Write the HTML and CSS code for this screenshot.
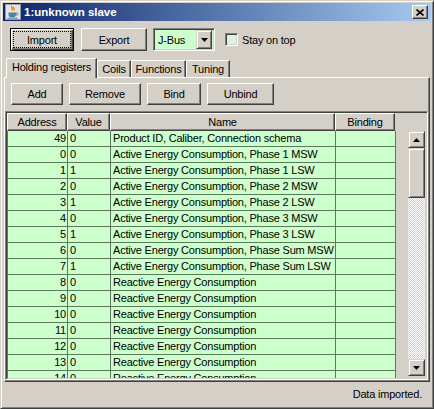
FILE: index.html
```html
<!DOCTYPE html>
<html lang="en">
  <head>
    <meta charset="UTF-8" />
    <title>1:unknown slave</title>
    <link rel="stylesheet" href="styles.css">
  </head>
  <body>
    <div class="window">
      <div class="titlebar">
        <svg class="app-icon" width="16" height="16" viewBox="0 0 16 16">
          <rect x="0.5" y="0.5" width="15" height="15" fill="#e4e4e4" stroke="#9a9a9a" />
          <path d="M7 2c-1.5 1.5 1.5 2.5 0 4.5M9 3c-1 1 1 2 0 3.5" stroke="#e76f00" fill="none" stroke-width="1.2" />
          <path d="M3.5 8.5h7.5v2.5c0 1.6-1.4 2.5-3.7 2.5s-3.8-.9-3.8-2.5z" fill="#5382a1" />
          <path d="M11 9.2h1.3c1 0 1 1.8 0 1.8H11" stroke="#5382a1" fill="none" />
          <path d="M2.5 14.2h10" stroke="#5382a1" />
        </svg>
        <span class="title">1:unknown slave</span>
        <span class="close-btn">
          <svg width="8" height="7" viewBox="0 0 8 7">
            <path d="M0.5 0.5l7 6M7.5 0.5l-7 6" stroke="#000" stroke-width="1.6" />
          </svg>
        </span>
      </div>

      <div class="toolbar">
        <button class="btn btn-default import-btn"><span class="focus-rect">Import</span></button>
        <button class="btn export-btn">Export</button>
        <div class="combo">
          <span class="combo-text">J-Bus</span>
          <span class="combo-arrow">
            <svg width="7" height="4" viewBox="0 0 7 4"><path d="M0 0h7L3.5 4z" fill="#000" /></svg>
          </span>
        </div>
        <label class="check"><span class="check-box"></span>Stay on top</label>
      </div>

      <div class="tabs">
        <span class="tab tab-active tab-holding">Holding registers</span>
        <span class="tab tab-coils">Coils</span>
        <span class="tab tab-functions">Functions</span>
        <span class="tab tab-tuning">Tuning</span>
      </div>

      <div class="panel">
        <div class="actions">
          <button class="btn add-btn">Add</button>
          <button class="btn remove-btn">Remove</button>
          <button class="btn bind-btn">Bind</button>
          <button class="btn unbind-btn">Unbind</button>
        </div>

        <div class="scrollpane">
          <div class="header-row">
            <span class="th col-address">Address</span>
            <span class="th col-value">Value</span>
            <span class="th col-name">Name</span>
            <span class="th col-binding">Binding</span>
          </div>
          <div class="body-row">
            <div class="viewport">
              <table class="grid">
                <colgroup>
                  <col class="col-address" />
                  <col class="col-value" />
                  <col class="col-name" />
                  <col class="col-binding" />
                </colgroup>
                <tr><td class="num">49</td><td>0</td><td>Product ID, Caliber, Connection schema</td><td></td></tr>
                <tr><td class="num">0</td><td>0</td><td>Active Energy Consumption, Phase 1 MSW</td><td></td></tr>
                <tr><td class="num">1</td><td>1</td><td>Active Energy Consumption, Phase 1 LSW</td><td></td></tr>
                <tr><td class="num">2</td><td>0</td><td>Active Energy Consumption, Phase 2 MSW</td><td></td></tr>
                <tr><td class="num">3</td><td>1</td><td>Active Energy Consumption, Phase 2 LSW</td><td></td></tr>
                <tr><td class="num">4</td><td>0</td><td>Active Energy Consumption, Phase 3 MSW</td><td></td></tr>
                <tr><td class="num">5</td><td>1</td><td>Active Energy Consumption, Phase 3 LSW</td><td></td></tr>
                <tr><td class="num">6</td><td>0</td><td>Active Energy Consumption, Phase Sum MSW</td><td></td></tr>
                <tr><td class="num">7</td><td>1</td><td>Active Energy Consumption, Phase Sum LSW</td><td></td></tr>
                <tr><td class="num">8</td><td>0</td><td>Reactive Energy Consumption</td><td></td></tr>
                <tr><td class="num">9</td><td>0</td><td>Reactive Energy Consumption</td><td></td></tr>
                <tr><td class="num">10</td><td>0</td><td>Reactive Energy Consumption</td><td></td></tr>
                <tr><td class="num">11</td><td>0</td><td>Reactive Energy Consumption</td><td></td></tr>
                <tr><td class="num">12</td><td>0</td><td>Reactive Energy Consumption</td><td></td></tr>
                <tr><td class="num">13</td><td>0</td><td>Reactive Energy Consumption</td><td></td></tr>
                <tr><td class="num">14</td><td>0</td><td>Reactive Energy Consumption</td><td></td></tr>
              </table>
            </div>
            <div class="vscroll">
              <span class="scroll-btn">
                <svg width="7" height="4" viewBox="0 0 7 4"><path d="M0 4h7L3.5 0z" fill="#000" /></svg>
              </span>
              <span class="scroll-thumb"></span>
              <span class="scroll-track"></span>
              <span class="scroll-btn">
                <svg width="7" height="4" viewBox="0 0 7 4"><path d="M0 0h7L3.5 4z" fill="#000" /></svg>
              </span>
            </div>
          </div>
        </div>
      </div>

      <div class="status">Data imported.</div>
    </div>
  </body>
</html>
```

FILE: styles.css
```css
body {
  margin: 0;
  font-family: "Liberation Sans", Arial, sans-serif;
  font-size: 11px;
  letter-spacing: -0.2px;
  color: #000;
  background: #d4d0c8;
}
.window {
  width: 434px;
  height: 409px;
  box-sizing: border-box;
  padding: 2px;
  border: 1px solid;
  border-color: #d4d0c8 #404040 #404040 #d4d0c8;
  box-shadow: inset 1px 1px #fff, inset -1px -1px #808080;
  background: #d4d0c8;
  display: flex;
  flex-direction: column;
}

/* Title bar */
.titlebar {
  height: 18px;
  flex: none;
  display: flex;
  align-items: center;
  padding-left: 2px;
  background: linear-gradient(to right, #0a246a, #a6caf0);
}
.app-icon {
  display: block;
  flex: none;
}
.title {
  margin-left: 3px;
  color: #fff;
  font-weight: bold;
  font-size: 11.5px;
  letter-spacing: 0;
}
.close-btn {
  margin-left: auto;
  margin-right: 3px;
  width: 16px;
  height: 14px;
  box-sizing: border-box;
  border: 1px solid;
  border-color: #fff #404040 #404040 #fff;
  box-shadow: inset -1px -1px #808080;
  background: #d4d0c8;
  display: flex;
  align-items: center;
  justify-content: center;
}
.close-btn svg {
  display: block;
}

/* Buttons */
.btn {
  height: 23px;
  padding: 0;
  box-sizing: border-box;
  border: 1px solid;
  border-color: #fff #404040 #404040 #fff;
  box-shadow: inset -1px -1px #808080;
  background: #d4d0c8;
  font-family: inherit;
  font-size: 11px;
  letter-spacing: -0.2px;
  color: #000;
  flex: none;
}
.btn-default {
  border-color: #000;
  box-shadow: inset 1px 1px #fff, inset -1px -1px #404040, inset -2px -2px #808080;
  display: flex;
  align-items: center;
  justify-content: center;
}
.focus-rect {
  display: flex;
  align-items: center;
  justify-content: center;
  width: 56px;
  height: 15px;
  border: 1px dotted #000;
}

/* Toolbar */
.toolbar {
  height: 30px;
  flex: none;
  box-sizing: border-box;
  padding: 7px 0 0 7px;
  display: flex;
  align-items: flex-start;
}
.import-btn {
  width: 64px;
}
.export-btn {
  width: 66px;
  margin-left: 7px;
}
.combo {
  width: 62px;
  height: 23px;
  margin-left: 6px;
  box-sizing: border-box;
  border: 1px solid;
  border-color: #808080 #fff #fff #808080;
  box-shadow: inset 1px 1px #404040, inset -1px -1px #d4d0c8;
  background: #ccffcc;
  display: flex;
  align-items: center;
  padding: 2px;
}
.combo-text {
  flex: 1;
  padding-left: 2px;
}
.combo-arrow {
  width: 16px;
  height: 19px;
  box-sizing: border-box;
  border: 1px solid;
  border-color: #d4d0c8 #404040 #404040 #d4d0c8;
  box-shadow: inset 1px 1px #fff, inset -1px -1px #808080;
  background: #d4d0c8;
  display: flex;
  align-items: center;
  justify-content: center;
}
.combo-arrow svg,
.scroll-btn svg {
  display: block;
}
.check {
  display: flex;
  align-items: center;
  margin-left: 10px;
  height: 23px;
}
.check-box {
  width: 13px;
  height: 13px;
  box-sizing: border-box;
  margin-right: 4px;
  border: 1px solid;
  border-color: #808080 #fff #fff #808080;
  box-shadow: inset 1px 1px #404040, inset -1px -1px #d4d0c8;
  background: #d9f5dd;
}

/* Tabs */
.tabs {
  height: 19px;
  flex: none;
  margin-top: 7px;
  padding-left: 3px;
  display: flex;
  align-items: flex-end;
  position: relative;
  z-index: 1;
}
.tab {
  height: 17px;
  box-sizing: border-box;
  border-top: 1px solid #fff;
  border-left: 1px solid #fff;
  border-right: 1px solid #404040;
  box-shadow: inset -1px 0 #808080;
  display: flex;
  align-items: center;
  justify-content: center;
  background: #d4d0c8;
}
.tab-active {
  height: 20px;
  margin-bottom: -1px;
  padding-bottom: 3px;
}
.tab-holding {
  width: 91px;
}
.tab-coils {
  width: 34px;
}
.tab-functions {
  width: 55px;
}
.tab-tuning {
  width: 44px;
}

/* Tab panel */
.panel {
  flex: 1;
  margin: 0 1px;
  box-sizing: border-box;
  border: 1px solid;
  border-color: #fff #404040 #404040 #fff;
  box-shadow: inset -1px -1px #808080;
  padding: 5px 1px 1px 0;
  display: flex;
  flex-direction: column;
}
.actions {
  display: flex;
  gap: 6px;
  padding-left: 6px;
  height: 22px;
  flex: none;
}
.actions .btn {
  height: 22px;
}
.add-btn {
  width: 52px;
}
.remove-btn {
  width: 72px;
}
.bind-btn {
  width: 54px;
}
.unbind-btn {
  width: 67px;
}

/* Table */
.scrollpane {
  margin-top: 6px;
  height: 269px;
  flex: none;
  box-sizing: border-box;
  border: 1px solid;
  border-color: #808080 #fff #fff #808080;
  box-shadow: inset 1px 1px #404040, inset -1px -1px #d4d0c8;
  padding: 1px 2px 1px 1px;
  display: flex;
  flex-direction: column;
  overflow: hidden;
}
.header-row {
  display: flex;
  height: 18px;
  flex: none;
}
.th {
  box-sizing: border-box;
  border: 1px solid;
  border-color: #fff #404040 #404040 #fff;
  box-shadow: inset -1px -1px #808080;
  display: flex;
  align-items: center;
  justify-content: center;
}
.col-address {
  width: 60px;
}
.col-value {
  width: 43px;
}
.col-name {
  width: 225px;
}
.col-binding {
  width: 60px;
}
.body-row {
  flex: 1;
  display: flex;
  min-height: 0;
}
.viewport {
  flex: 1;
  overflow: hidden;
}
.grid {
  border-collapse: collapse;
  table-layout: fixed;
  width: 389px;
}
.grid td {
  height: 15px;
  padding: 0 2px;
  line-height: 15px;
  background: #ccffcc;
  border: 1px solid #5c7a5c;
  border-top: none;
  white-space: nowrap;
  overflow: hidden;
}
.grid td.num {
  text-align: right;
  padding-right: 1px;
}
.vscroll {
  width: 17px;
  flex: none;
  display: flex;
  flex-direction: column;
  padding-bottom: 2px;
}
.scroll-btn {
  width: 17px;
  height: 17px;
  flex: none;
  box-sizing: border-box;
  border: 1px solid;
  border-color: #d4d0c8 #404040 #404040 #d4d0c8;
  box-shadow: inset 1px 1px #fff, inset -1px -1px #808080;
  background: #d4d0c8;
  display: flex;
  align-items: center;
  justify-content: center;
}
.scroll-thumb {
  height: 50px;
  flex: none;
  box-sizing: border-box;
  border: 1px solid;
  border-color: #d4d0c8 #404040 #404040 #d4d0c8;
  box-shadow: inset 1px 1px #fff, inset -1px -1px #808080;
  background: #d4d0c8;
}
.scroll-track {
  flex: 1;
  background: repeating-conic-gradient(#d4d0c8 0 25%, #fff 0 50%) 0 0 / 2px 2px;
}

/* Status bar */
.status {
  height: 24px;
  flex: none;
  display: flex;
  align-items: center;
  justify-content: flex-end;
  padding-right: 9px;
}
```
